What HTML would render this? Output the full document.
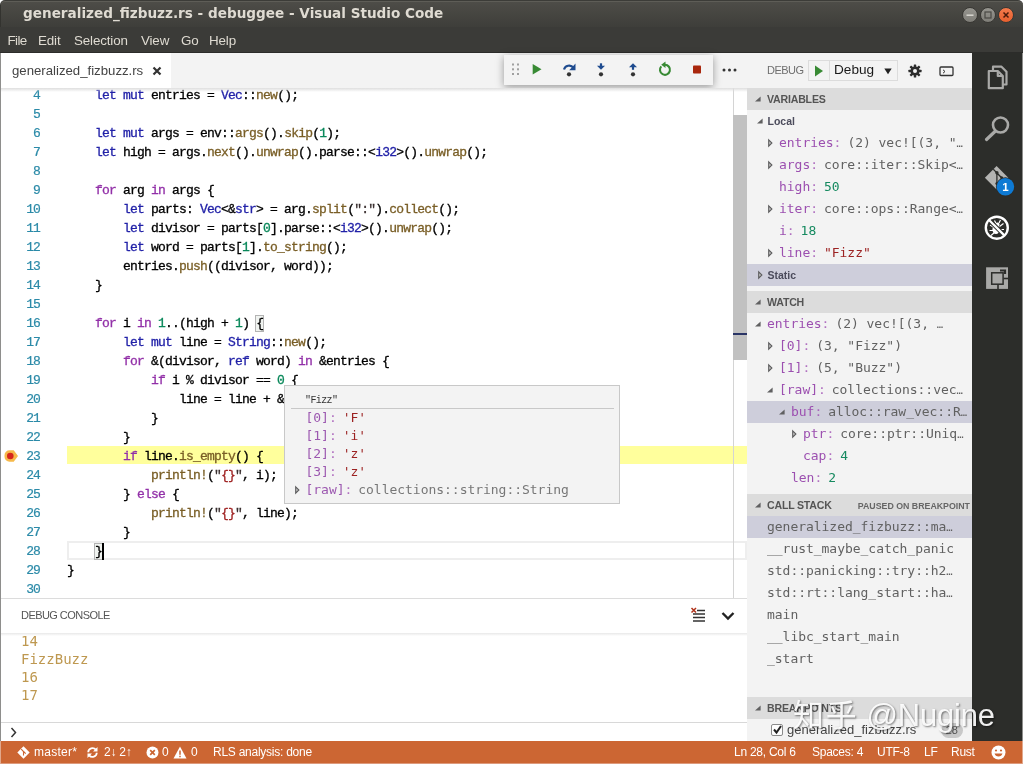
<!DOCTYPE html>
<html lang="en">
<head>
<meta charset="utf-8">
<title>generalized_fizbuzz.rs - debuggee - Visual Studio Code</title>
<style>
*{box-sizing:border-box;margin:0;padding:0}
html,body{width:1023px;height:764px;overflow:hidden;background:#fff}
body{position:relative;font-family:"Liberation Sans","Noto Sans CJK SC",sans-serif;font-size:13px;color:#333}
#root{position:absolute;left:0;top:0;width:1023px;height:764px;overflow:hidden;will-change:transform}
.abs{position:absolute}
/* title bar */
#title{left:0;top:0;width:1023px;height:27px;background:linear-gradient(#4e4d48,#3e3e3a);border-top:1px solid #3c3c38;box-shadow:inset 0 1px 0 #5e5d57;border-left:1px solid #33332f;border-radius:5px 5px 0 0}
#title .t{left:22px;top:4px;font-family:"DejaVu Sans","Liberation Sans",sans-serif;font-weight:bold;font-size:13.600px;color:#dfdbd2;letter-spacing:0px;white-space:nowrap}
.wb{position:absolute;top:5.500px;width:16px;height:16px;border-radius:50%;background:linear-gradient(#96958f,#7e7d77);border:1px solid #393834}
#menu{left:0;top:27px;width:1023px;height:26px;background:#3b3b38;border-bottom:1px solid #2c2c2a}
#menu span{position:absolute;top:6px;letter-spacing:-0.15px;font-size:13.4px;color:#dfdbd2;white-space:nowrap}
/* tabs */
#tabs{left:1px;top:53px;width:971px;height:35px;background:#f3f3f3}
#tab1{left:0;top:0;width:170px;height:35px;background:#fff}
#tab1 .n{left:11px;top:10px;font-size:13.2px;color:#444;white-space:nowrap}
/* editor */
#editor{left:1px;top:88px;width:746px;height:510px;background:#fff;overflow:hidden}
.ln{position:absolute;left:0;width:38.500px;text-align:right;color:#2b8aa8;-webkit-text-stroke:0.2px;font-family:"Liberation Mono",monospace;font-size:13px;letter-spacing:-1.2px;height:19px;line-height:19px}
.cl{position:absolute;left:66px;white-space:pre;color:#000;-webkit-text-stroke:0.3px;font-family:"Liberation Mono",monospace;font-size:13px;letter-spacing:-0.8px;height:19px;line-height:19px}
.k{color:#2222a8}.c{color:#9230a8}.q{color:#3a3030}.b{box-shadow:0 0 0 1px #b4b4b4;background:#f0f3f0}.f{color:#795e26}.t{color:#267f99}.n{color:#09885a}.s{color:#a02525}
/* sidebar */
#side{left:747px;top:88px;width:225px;height:653px;background:#f3f3f3;overflow:hidden}
.hd{position:absolute;left:0;width:225px;height:22px;background:#dcdcdc}
.hd b{position:absolute;left:20px;top:5px;font-size:10.600px;color:#555;letter-spacing:-0.2px;white-space:nowrap}
.row{position:absolute;left:0;width:225px;height:22px;line-height:22px;font-family:"DejaVu Sans Mono","Liberation Mono",monospace;font-size:13px;white-space:nowrap;color:#616161;letter-spacing:-0.03px}
.row .nm{color:#9c50b0}
.sel{background:#cecedb}
.tw{position:absolute;width:0;height:0}
/* activity */
#act{left:972px;top:53px;width:51px;height:688px;background:#2c2d2a}
/* panel */
#panel{left:1px;top:598px;width:746px;height:143px;background:#fff;border-top:1px solid #dcdcdc}
.con{position:absolute;left:20px;font-family:"DejaVu Sans Mono","Liberation Mono",monospace;font-size:14px;color:#be9850;height:18px;line-height:18px;white-space:nowrap}
/* status */
#status{left:0;top:741px;width:1023px;height:23px;background:#cc6633;color:#fff;font-size:12px;letter-spacing:-0.25px;border-bottom:1px solid #dd9a7c}
#status span{position:absolute;top:4px;white-space:nowrap}
#lb{left:0;top:53px;width:1px;height:688px;background:#8e8e8c}

.sub{position:absolute;left:0;width:225px;height:22px}
.sub b{position:absolute;left:20.500px;top:5px;font-size:10.500px;color:#4c4c5c;white-space:nowrap}
.co{color:#9b46b0;opacity:.75}
.gap{display:inline-block;width:6px}
.el{font-size:10.500px}
.vn{color:#168a60}.vs{color:#9c2222}
.hd i{position:absolute;right:2px;top:6.500px;font-style:normal;font-weight:bold;font-size:8.800px;color:#666;white-space:nowrap}
.bp{position:absolute;left:0;width:225px;height:22px;font-size:13px;color:#444;white-space:nowrap}
.cb{position:absolute;left:24px;top:5px;width:12px;height:12px;border:1px solid #8a8a8a;border-radius:2px;background:#fdfdfd}
.cb svg{position:absolute;left:0;top:-1px}
.bn{position:absolute;right:9px;top:4px;font-size:11px;background:#c8c8c8;color:#555;border-radius:8px;padding:0 5px;height:15px;line-height:15px}
/* toolbar */
#dbt{left:504px;top:55px;width:209px;height:30px;background:#f3f3f3;box-shadow:0 2px 8px rgba(0,0,0,.38)}
/* hover */
#hov{left:284px;top:385px;width:336px;height:119px;background:#f3f3f3;border:1px solid #c8c8c8}
.hr{position:absolute;left:20.500px;height:18px;line-height:18px;font-family:"DejaVu Sans Mono","Liberation Mono",monospace;font-size:13px;white-space:nowrap;color:#777;letter-spacing:-0.03px}
.hr .nm{color:#9c58b0}
.wm{left:793px;top:693.500px;word-spacing:-0.500px;font-size:31px;line-height:44px;color:rgba(255,255,255,.93);white-space:nowrap;text-shadow:1px 1px 2px rgba(0,0,0,.5);letter-spacing:-0.2px}
</style>
</head>
<body>
<div id="root">
<div id="title" class="abs"><div class="t abs">generalized_fizbuzz.rs - debuggee - Visual Studio Code</div>
<div class="wb" style="left:960.500px"><svg width="14" height="14" viewBox="0 0 14 14"><path d="M3.500 7.200h7" stroke="#d4d2cc" stroke-width="1.600"/></svg></div><div class="wb" style="left:978.500px"><svg width="14" height="14" viewBox="0 0 14 14"><rect x="4" y="4" width="6" height="6" fill="none" stroke="#4a4944" stroke-width="1.200"/></svg></div><div class="wb" style="left:996.500px;background:linear-gradient(#f47a4c,#e8602e)"><svg width="14" height="14" viewBox="0 0 14 14"><path d="M4.500 4.500l5 5M9.500 4.500l-5 5" stroke="#4a1a0a" stroke-width="1.500"/></svg></div>
</div>
<div id="menu" class="abs"><span style="left:7.500px;letter-spacing:-0.6px">File</span><span style="left:38px">Edit</span><span style="left:74px">Selection</span><span style="left:141px">View</span><span style="left:181px">Go</span><span style="left:209px">Help</span></div>
<div id="tabs" class="abs"><div id="tab1" class="abs"><div class="n abs">generalized_fizbuzz.rs</div>
<svg class="abs" style="left:151px;top:13px" width="10" height="10" viewBox="0 0 10 10"><path d="M1.500 1.500l7 7M8.500 1.500l-7 7" stroke="#333" stroke-width="2.200" fill="none"/></svg></div>
<svg class="abs" style="left:720px;top:14px" width="18" height="6" viewBox="0 0 18 6"><circle cx="3" cy="3" r="1.500" fill="#333"/><circle cx="8.500" cy="3" r="1.500" fill="#333"/><circle cx="14" cy="3" r="1.500" fill="#333"/></svg>
<div class="abs" style="left:766px;top:11px;font-size:11px;color:#6f6f6f;letter-spacing:-0.5px">DEBUG</div>
<div class="abs" style="left:807px;top:7px;width:90px;height:21px;border:1px solid #dcdcdc;background:#f3f3f3"></div>
<div class="abs" style="left:828px;top:7px;width:1px;height:21px;background:#dcdcdc"></div>
<svg class="abs" style="left:813px;top:12px" width="10" height="12" viewBox="0 0 10 12"><path d="M1 0.500l8 5.500-8 5.500z" fill="#388a34"/></svg>
<div class="abs" style="left:833px;top:9px;font-size:13.600px;color:#1a1a1a">Debug</div>
<svg class="abs" style="left:883px;top:14.500px" width="8" height="7" viewBox="0 0 8 7"><path d="M0.300 0.500h7.400L4 6.300z" fill="#222"/></svg>
<svg class="abs" style="left:907px;top:10.500px" width="14" height="14" viewBox="0 0 16 16"><g fill="#2d2d2d"><circle cx="8" cy="8" r="5.200"/><g id="gt"><rect x="6.600" y="0.500" width="2.800" height="15" rx="0.600"/></g><rect x="6.600" y="0.500" width="2.800" height="15" rx="0.600" transform="rotate(45 8 8)"/><rect x="6.600" y="0.500" width="2.800" height="15" rx="0.600" transform="rotate(90 8 8)"/><rect x="6.600" y="0.500" width="2.800" height="15" rx="0.600" transform="rotate(135 8 8)"/></g><circle cx="8" cy="8" r="2.300" fill="#f3f3f3"/></svg>
<svg class="abs" style="left:937.500px;top:12.500px" width="16" height="12" viewBox="0 0 16 12"><rect x="1" y="1" width="13" height="8.500" rx="1" fill="none" stroke="#333" stroke-width="1.300"/><path d="M4 3.800l2 1.700-2 1.700" fill="none" stroke="#333" stroke-width="1"/></svg>
</div>
<div id="dbt" class="abs">
<svg class="abs" style="left:0;top:-1px" width="209" height="31" viewBox="0 0 209 31">
<g fill="#a0a0a0"><rect x="8" y="9.500" width="2" height="2"/><rect x="13" y="9.500" width="2" height="2"/><rect x="8" y="14.300" width="2" height="2"/><rect x="13" y="14.300" width="2" height="2"/><rect x="8" y="19" width="2" height="2"/><rect x="13" y="19" width="2" height="2"/></g>
<path d="M28.700 10l8.800 5.200-8.800 5.200z" fill="#388a34"/>
<path d="M60 15.500c1-4 6.500-5.500 9.500-1.800" fill="none" stroke="#1e4b8f" stroke-width="2.200"/><path d="M71.500 9.500v6.800h-6.300z" fill="#1e4b8f"/><circle cx="65" cy="20.300" r="2.100" fill="#333"/>
<path d="M97 9.300v4" stroke="#1e4b8f" stroke-width="2.200"/><path d="M93 11.800h8l-4 4z" fill="#1e4b8f"/><circle cx="97" cy="20.300" r="2.100" fill="#333"/>
<path d="M129 11.500v4.300" stroke="#1e4b8f" stroke-width="2.200"/><path d="M125 13.300h8l-4-4z" fill="#1e4b8f"/><circle cx="129" cy="20.300" r="2.100" fill="#333"/>
<path d="M157.300 12.400a5 5 0 1 0 3.700-1.600" fill="none" stroke="#388a34" stroke-width="2.100"/><path d="M161.500 7.500v6.500l-4.300-3.200z" fill="#388a34"/>
<rect x="189" y="11.500" width="8" height="8" rx="0.800" fill="#a9270d"/>
</svg></div>
<div id="editor" class="abs">
<div class="abs" style="left:0;top:0;width:746px;height:4px;background:linear-gradient(#dedede,rgba(255,255,255,0));z-index:3"></div>
<div class="abs" style="left:66px;top:358px;width:680px;height:18px;background:#ffff9c"></div>
<div class="abs" style="left:66px;top:453px;width:680px;height:19px;border:2px solid #eeeeee"></div>
<svg class="abs" style="left:2px;top:361px" width="16" height="14" viewBox="0 0 16 14"><path d="M6.500 1.200h4.200l4.300 5.800-4.300 5.800H6.500A5 5 0 0 1 1.500 7.800v-1.600A5 5 0 0 1 6.500 1.200z" fill="#f6b94a"/><circle cx="7.300" cy="7" r="3.300" fill="#d6261c"/></svg>
<div class="ln" style="top:-2px">4</div>
<div class="cl" style="top:-2px">    <span class="k">let</span> <span class="k">mut</span> entries = <span class="k">Vec</span>::<span class="f">new</span>();</div>
<div class="ln" style="top:17px">5</div>
<div class="ln" style="top:36px">6</div>
<div class="cl" style="top:36px">    <span class="k">let</span> <span class="k">mut</span> args = env::<span class="f">args</span>().<span class="f">skip</span>(<span class="n">1</span>);</div>
<div class="ln" style="top:55px">7</div>
<div class="cl" style="top:55px">    <span class="k">let</span> high = args.<span class="f">next</span>().<span class="f">unwrap</span>().parse::&lt;<span class="k">i32</span>&gt;().<span class="f">unwrap</span>();</div>
<div class="ln" style="top:74px">8</div>
<div class="ln" style="top:93px">9</div>
<div class="cl" style="top:93px">    <span class="c">for</span> arg <span class="c">in</span> args {</div>
<div class="ln" style="top:112px">10</div>
<div class="cl" style="top:112px">        <span class="k">let</span> parts: <span class="k">Vec</span>&lt;&amp;<span class="k">str</span>&gt; = arg.<span class="f">split</span>(<span class="q">":"</span>).<span class="f">collect</span>();</div>
<div class="ln" style="top:131px">11</div>
<div class="cl" style="top:131px">        <span class="k">let</span> divisor = parts[<span class="n">0</span>].parse::&lt;<span class="k">i32</span>&gt;().<span class="f">unwrap</span>();</div>
<div class="ln" style="top:150px">12</div>
<div class="cl" style="top:150px">        <span class="k">let</span> word = parts[<span class="n">1</span>].<span class="f">to_string</span>();</div>
<div class="ln" style="top:169px">13</div>
<div class="cl" style="top:169px">        entries.<span class="f">push</span>((divisor, word));</div>
<div class="ln" style="top:188px">14</div>
<div class="cl" style="top:188px">    }</div>
<div class="ln" style="top:207px">15</div>
<div class="ln" style="top:226px">16</div>
<div class="cl" style="top:226px">    <span class="c">for</span> i <span class="c">in</span> <span class="n">1</span>..(high + <span class="n">1</span>) <span class="b">{</span></div>
<div class="ln" style="top:245px">17</div>
<div class="cl" style="top:245px">        <span class="k">let</span> <span class="k">mut</span> line = <span class="k">String</span>::<span class="f">new</span>();</div>
<div class="ln" style="top:264px">18</div>
<div class="cl" style="top:264px">        <span class="c">for</span> &amp;(divisor, <span class="k">ref</span> word) <span class="c">in</span> &amp;entries {</div>
<div class="ln" style="top:283px">19</div>
<div class="cl" style="top:283px">            <span class="c">if</span> i % divisor == <span class="n">0</span> {</div>
<div class="ln" style="top:302px">20</div>
<div class="cl" style="top:302px">                line = line + &amp;word;</div>
<div class="ln" style="top:321px">21</div>
<div class="cl" style="top:321px">            }</div>
<div class="ln" style="top:340px">22</div>
<div class="cl" style="top:340px">        }</div>
<div class="ln" style="top:359px">23</div>
<div class="cl" style="top:359px">        <span class="c">if</span> line.<span class="f">is_empty</span>() {</div>
<div class="ln" style="top:378px">24</div>
<div class="cl" style="top:378px">            <span class="f">println!</span>(<span class="q">"</span><span class="s">{}</span><span class="q">"</span>, i);</div>
<div class="ln" style="top:397px">25</div>
<div class="cl" style="top:397px">        } <span class="c">else</span> {</div>
<div class="ln" style="top:416px">26</div>
<div class="cl" style="top:416px">            <span class="f">println!</span>(<span class="q">"</span><span class="s">{}</span><span class="q">"</span>, line);</div>
<div class="ln" style="top:435px">27</div>
<div class="cl" style="top:435px">        }</div>
<div class="ln" style="top:454px">28</div>
<div class="cl" style="top:454px">    <span class="b">}</span></div>
<div class="ln" style="top:473px">29</div>
<div class="cl" style="top:473px">}</div>
<div class="ln" style="top:492px">30</div>
<div class="abs" style="left:101px;top:455px;width:2px;height:17px;background:#000"></div>
<div class="abs" style="left:732px;top:0;width:1px;height:510px;background:#d4d4d4"></div>
<div class="abs" style="left:732px;top:27px;width:14px;height:245px;background:#c1c1c1"></div>
<div class="abs" style="left:732px;top:245px;width:14px;height:2px;background:#2a3566"></div>
</div>
<div id="side" class="abs">
<div class="hd" style="top:0px"><svg class="abs" style="left:6.500px;top:6.500px" width="8" height="8" viewBox="0 0 8 8"><path d="M6.600 1.400v5.200H1z" fill="#606061"/></svg><b>VARIABLES</b></div>
<div class="sub" style="top:22px"><svg class="abs" style="left:9px;top:7px" width="8" height="8" viewBox="0 0 8 8"><path d="M6.600 1.400v5.200H1z" fill="#606061"/></svg><b>Local</b></div>
<div class="row" style="top:44px"><svg class="abs" style="left:19px;top:6px" width="8" height="10" viewBox="0 0 8 10"><path d="M2.700 1.800l3.200 3.200-3.200 3.200z" fill="#c8c8c8" stroke="#5c5c5d" stroke-width="1.100"/></svg><span class="abs" style="left:32px"><span class="nm">entries</span><span class="co">:</span><span class="gap"></span>(2) vec![(3, &quot;<span class="el">…</span></span></div>
<div class="row" style="top:66px"><svg class="abs" style="left:19px;top:6px" width="8" height="10" viewBox="0 0 8 10"><path d="M2.700 1.800l3.200 3.200-3.200 3.200z" fill="#c8c8c8" stroke="#5c5c5d" stroke-width="1.100"/></svg><span class="abs" style="left:32px"><span class="nm">args</span><span class="co">:</span><span class="gap"></span>core::iter::Skip&lt;<span class="el">…</span></span></div>
<div class="row" style="top:88px"><span class="abs" style="left:32px"><span class="nm">high</span><span class="co">:</span><span class="gap"></span><span class="vn">50</span></span></div>
<div class="row" style="top:110px"><svg class="abs" style="left:19px;top:6px" width="8" height="10" viewBox="0 0 8 10"><path d="M2.700 1.800l3.200 3.200-3.200 3.200z" fill="#c8c8c8" stroke="#5c5c5d" stroke-width="1.100"/></svg><span class="abs" style="left:32px"><span class="nm">iter</span><span class="co">:</span><span class="gap"></span>core::ops::Range&lt;<span class="el">…</span></span></div>
<div class="row" style="top:132px"><span class="abs" style="left:32px"><span class="nm">i</span><span class="co">:</span><span class="gap"></span><span class="vn">18</span></span></div>
<div class="row" style="top:154px"><svg class="abs" style="left:19px;top:6px" width="8" height="10" viewBox="0 0 8 10"><path d="M2.700 1.800l3.200 3.200-3.200 3.200z" fill="#c8c8c8" stroke="#5c5c5d" stroke-width="1.100"/></svg><span class="abs" style="left:32px"><span class="nm">line</span><span class="co">:</span><span class="gap"></span><span class="vs">&quot;Fizz&quot;</span></span></div>
<div class="sub sel" style="top:176px"><svg class="abs" style="left:9px;top:6px" width="8" height="10" viewBox="0 0 8 10"><path d="M2.700 1.800l3.200 3.200-3.200 3.200z" fill="#c8c8c8" stroke="#5c5c5d" stroke-width="1.100"/></svg><b>Static</b></div>
<div class="hd" style="top:203px"><svg class="abs" style="left:6.500px;top:6.500px" width="8" height="8" viewBox="0 0 8 8"><path d="M6.600 1.400v5.200H1z" fill="#606061"/></svg><b>WATCH</b></div>
<div class="row" style="top:225px"><svg class="abs" style="left:6.500px;top:6.500px" width="8" height="8" viewBox="0 0 8 8"><path d="M6.600 1.400v5.200H1z" fill="#606061"/></svg><span class="abs" style="left:20px"><span class="nm">entries</span><span class="co">:</span><span class="gap"></span>(2) vec![(3, <span class="el">…</span></span></div>
<div class="row" style="top:247px"><svg class="abs" style="left:19px;top:6px" width="8" height="10" viewBox="0 0 8 10"><path d="M2.700 1.800l3.200 3.200-3.200 3.200z" fill="#c8c8c8" stroke="#5c5c5d" stroke-width="1.100"/></svg><span class="abs" style="left:32px"><span class="nm">[0]</span><span class="co">:</span><span class="gap"></span>(3, &quot;Fizz&quot;)</span></div>
<div class="row" style="top:269px"><svg class="abs" style="left:19px;top:6px" width="8" height="10" viewBox="0 0 8 10"><path d="M2.700 1.800l3.200 3.200-3.200 3.200z" fill="#c8c8c8" stroke="#5c5c5d" stroke-width="1.100"/></svg><span class="abs" style="left:32px"><span class="nm">[1]</span><span class="co">:</span><span class="gap"></span>(5, &quot;Buzz&quot;)</span></div>
<div class="row" style="top:291px"><svg class="abs" style="left:19px;top:7px" width="8" height="8" viewBox="0 0 8 8"><path d="M6.600 1.400v5.200H1z" fill="#606061"/></svg><span class="abs" style="left:32px"><span class="nm">[raw]</span><span class="co">:</span><span class="gap"></span>collections::vec<span class="el">…</span></span></div>
<div class="row sel" style="top:313px"><svg class="abs" style="left:31px;top:7px" width="8" height="8" viewBox="0 0 8 8"><path d="M6.600 1.400v5.200H1z" fill="#606061"/></svg><span class="abs" style="left:44px"><span class="nm">buf</span><span class="co">:</span><span class="gap"></span>alloc::raw_vec::R<span class="el">…</span></span></div>
<div class="row" style="top:335px"><svg class="abs" style="left:43px;top:6px" width="8" height="10" viewBox="0 0 8 10"><path d="M2.700 1.800l3.200 3.200-3.200 3.200z" fill="#c8c8c8" stroke="#5c5c5d" stroke-width="1.100"/></svg><span class="abs" style="left:56px"><span class="nm">ptr</span><span class="co">:</span><span class="gap"></span>core::ptr::Uniq<span class="el">…</span></span></div>
<div class="row" style="top:357px"><span class="abs" style="left:56px"><span class="nm">cap</span><span class="co">:</span><span class="gap"></span><span class="vn">4</span></span></div>
<div class="row" style="top:379px"><span class="abs" style="left:44px"><span class="nm">len</span><span class="co">:</span><span class="gap"></span><span class="vn">2</span></span></div>
<div class="hd" style="top:406px"><svg class="abs" style="left:6.500px;top:6.500px" width="8" height="8" viewBox="0 0 8 8"><path d="M6.600 1.400v5.200H1z" fill="#606061"/></svg><b>CALL STACK</b><i>PAUSED ON BREAKPOINT</i></div>
<div class="row sel" style="top:428px"><span class="abs" style="left:20px">generalized_fizbuzz::ma<span class="el">…</span></span></div>
<div class="row" style="top:450px"><span class="abs" style="left:20px">__rust_maybe_catch_panic</span></div>
<div class="row" style="top:472px"><span class="abs" style="left:20px">std::panicking::try::h2<span class="el">…</span></span></div>
<div class="row" style="top:494px"><span class="abs" style="left:20px">std::rt::lang_start::ha<span class="el">…</span></span></div>
<div class="row" style="top:516px"><span class="abs" style="left:20px">main</span></div>
<div class="row" style="top:538px"><span class="abs" style="left:20px">__libc_start_main</span></div>
<div class="row" style="top:560px"><span class="abs" style="left:20px">_start</span></div>
<div class="hd" style="top:609px"><svg class="abs" style="left:6.500px;top:6.500px" width="8" height="8" viewBox="0 0 8 8"><path d="M6.600 1.400v5.200H1z" fill="#606061"/></svg><b>BREAKPOINTS</b></div>
<div class="bp" style="top:631px"><span class="cb"><svg width="11" height="11" viewBox="0 0 11 11"><path d="M2 5.500l2.500 3L9 2" fill="none" stroke="#222" stroke-width="2"/></svg></span><span class="abs" style="left:40px;top:3px">generalized_fizbuzz.rs</span><span class="bn">28</span></div>
</div>
<div id="act" class="abs">
<svg class="abs" style="left:0;top:0" width="51" height="260" viewBox="0 0 51 260">
<g fill="none" stroke="#a9a9a7" stroke-width="2.200" stroke-linejoin="round">
<path d="M21 17.500v-3.800h8.500l5 5V31.500h-3.800"/>
<path d="M16.800 18h9l5 5v12.200h-14z" fill="#2c2d2a"/><path d="M25.800 18v5h5"/>
</g>
<circle cx="28.500" cy="72" r="7.500" fill="none" stroke="#a9a9a7" stroke-width="2.600"/><path d="M23.500 78l-9 8.500" stroke="#a9a9a7" stroke-width="3.200" stroke-linecap="round"/>
<path d="M24.600 113l11.700 11.700-11.700 11.700-11.700-11.700z" fill="#b4b4b2"/>
<path d="M21.300 116.300l3.600 3.600v10.500M24.900 120l5 5" stroke="#2c2d2a" stroke-width="1.300" fill="none"/>
<circle cx="24.900" cy="119.800" r="1.700" fill="#2c2d2a"/><circle cx="29.700" cy="124.800" r="1.500" fill="#2c2d2a"/><circle cx="24.900" cy="130.500" r="1.500" fill="#2c2d2a"/>
<circle cx="33.400" cy="133.700" r="9.500" fill="#2c2d2a"/>
<circle cx="33.400" cy="133.700" r="8.800" fill="#0e7ad4"/>
<circle cx="24.800" cy="174.700" r="11" fill="none" stroke="#fff" stroke-width="2.400"/>
<ellipse cx="24" cy="176.500" rx="3.600" ry="4.600" fill="#fff"/><circle cx="25.500" cy="171.500" r="2" fill="#fff"/>
<path d="M18 172l4 2.500M31.500 170.500l-4 3M17.500 177.500h4M32 176.500h-4M19 182.500l3.500-3M30.500 182l-3-3M22.500 167.500l1.500 3M28.500 167l-1.500 3" stroke="#fff" stroke-width="1.200"/>
<path d="M16.500 169l13.500 13.500" stroke="#2c2d2a" stroke-width="4.400" transform="translate(1.300,-1.300)"/>
<path d="M17 167l15.600 15.600" stroke="#fff" stroke-width="2.300"/>
<rect x="14.100" y="214.300" width="21.900" height="21.600" fill="#a9a9a7"/>
<rect x="19.700" y="219.800" width="11.400" height="11.400" fill="#a9a9a7" stroke="#2c2d2a" stroke-width="1.500"/>
<path d="M28 217.500h5v3.500" stroke="#2c2d2a" stroke-width="2.200" fill="none"/><path d="M31.500 225.500h4.500" stroke="#2c2d2a" stroke-width="1.600"/><path d="M26 231.500v4.400" stroke="#2c2d2a" stroke-width="1.600"/>
</svg>
<div class="abs" style="left:24.400px;top:124.700px;width:18px;text-align:center;font-size:11.500px;font-weight:bold;color:#fff;line-height:18px">1</div>
</div>
<div id="panel" class="abs">
<div class="abs" style="left:20px;top:10px;font-size:11px;letter-spacing:-0.55px;color:#555;white-space:nowrap">DEBUG CONSOLE</div>
<svg class="abs" style="left:689px;top:7.500px" width="16" height="16" viewBox="0 0 16 16"><path d="M7 3.500h8M3 7h12M3 10.500h12M3 14h12" stroke="#333" stroke-width="1.600"/><path d="M1.500 1l4.500 4.500M6 1L1.500 5.500" stroke="#b0321a" stroke-width="1.500"/></svg>
<svg class="abs" style="left:720px;top:12px" width="14" height="10" viewBox="0 0 14 10"><path d="M1.500 2l5.500 5.500L12.500 2" fill="none" stroke="#222" stroke-width="2.400"/></svg>
<div class="abs" style="left:0;top:34px;width:746px;height:3px;background:linear-gradient(#e8e8e8,#fff)"></div>
<div class="con" style="top:33px">14</div><div class="con" style="top:51px">FizzBuzz</div><div class="con" style="top:69px">16</div><div class="con" style="top:87px">17</div>
<div class="abs" style="left:0;top:123px;width:746px;height:1px;background:#d8d8d8"></div>
<svg class="abs" style="left:9px;top:128px" width="8" height="11" viewBox="0 0 8 11"><path d="M1.500 1l4 4.500-4 4.500" fill="none" stroke="#333" stroke-width="1.500"/></svg>
</div>
<div id="status" class="abs">
<svg class="abs" style="left:17px;top:5px" width="13" height="13" viewBox="0 0 13 13"><path d="M6.500 0.300l6.200 6.200-6.200 6.200L0.300 6.500z" fill="#fff"/><path d="M4.200 3.200l2.300 2.300v4M6.500 5.500l2.200 2.200" stroke="#cc6633" stroke-width="1.100" fill="none"/></svg>
<span style="left:34px;letter-spacing:0.25px">master*</span>
<svg class="abs" style="left:86px;top:5px" width="13" height="13" viewBox="0 0 13 13"><path d="M2.200 6.200a4.300 4.300 0 0 1 7.600-2.500M10.800 6.800a4.300 4.300 0 0 1-7.600 2.500" fill="none" stroke="#fff" stroke-width="1.800"/><path d="M11.500 1v4.500H7zM1.500 12V7.500H6z" fill="#fff"/></svg>
<span style="left:104px">2↓ 2↑</span>
<svg class="abs" style="left:146px;top:5px" width="13" height="13" viewBox="0 0 13 13"><circle cx="6.500" cy="6.500" r="6" fill="#fff"/><path d="M4.200 4.200l4.600 4.600M8.800 4.200l-4.600 4.600" stroke="#cc6633" stroke-width="1.700"/></svg>
<span style="left:162px">0</span>
<svg class="abs" style="left:173px;top:5px" width="14" height="13" viewBox="0 0 14 13"><path d="M7 0.500l6.500 12h-13z" fill="#fff"/><path d="M7 4.500v4.200M7 9.800v1.500" stroke="#cc6633" stroke-width="1.500"/></svg>
<span style="left:191px">0</span>
<span style="left:213px">RLS analysis: done</span>
<span style="left:734px">Ln 28, Col 6</span><span style="left:812px">Spaces: 4</span><span style="left:877px">UTF-8</span><span style="left:924px">LF</span><span style="left:951px">Rust</span>
<svg class="abs" style="left:991px;top:4px" width="15" height="15" viewBox="0 0 15 15"><circle cx="7.500" cy="7.500" r="7" fill="#fff"/><circle cx="5" cy="5.500" r="1.100" fill="#cc6633"/><circle cx="10" cy="5.500" r="1.100" fill="#cc6633"/><path d="M3.500 8.500a4.200 4.200 0 0 0 8 0z" fill="#cc6633"/></svg>
</div>
<div id="hov" class="abs">
<div class="abs" style="left:20px;top:9px;font-family:'Liberation Mono',monospace;font-size:10px;letter-spacing:-0.6px;color:#333;white-space:nowrap">"Fizz"</div>
<div class="abs" style="left:6px;top:22px;width:323px;height:1px;background:#c8c8c8"></div>
<div class="hr" style="top:23px"><span class="nm">[0]</span><span class="co">:</span><span class="gap"></span><span class="vs">'F'</span></div>
<div class="hr" style="top:41px"><span class="nm">[1]</span><span class="co">:</span><span class="gap"></span><span class="vs">'i'</span></div>
<div class="hr" style="top:59px"><span class="nm">[2]</span><span class="co">:</span><span class="gap"></span><span class="vs">'z'</span></div>
<div class="hr" style="top:77px"><span class="nm">[3]</span><span class="co">:</span><span class="gap"></span><span class="vs">'z'</span></div>
<div class="hr" style="top:95px"><span class="nm">[raw]</span><span class="co">:</span><span class="gap"></span>collections::string::String</div>
<svg class="abs" style="left:8px;top:99px" width="8" height="10" viewBox="0 0 8 10"><path d="M2.700 1.800l3.200 3.200-3.200 3.200z" fill="#c8c8c8" stroke="#5c5c5d" stroke-width="1.100"/></svg>
</div>
<div class="wm abs"><span style="letter-spacing:1.800px">知乎</span> @Nugine</div>
<div id="lb" class="abs"></div>
<div class="abs" style="left:1022px;top:53px;width:1px;height:688px;background:#8e8e8c"></div>
<div class="abs" style="left:1022px;top:741px;width:1px;height:23px;background:#e2a88c"></div>
<div class="abs" style="left:0;top:741px;width:1px;height:23px;background:#e2a88c"></div>
</div>
</body>
</html>
